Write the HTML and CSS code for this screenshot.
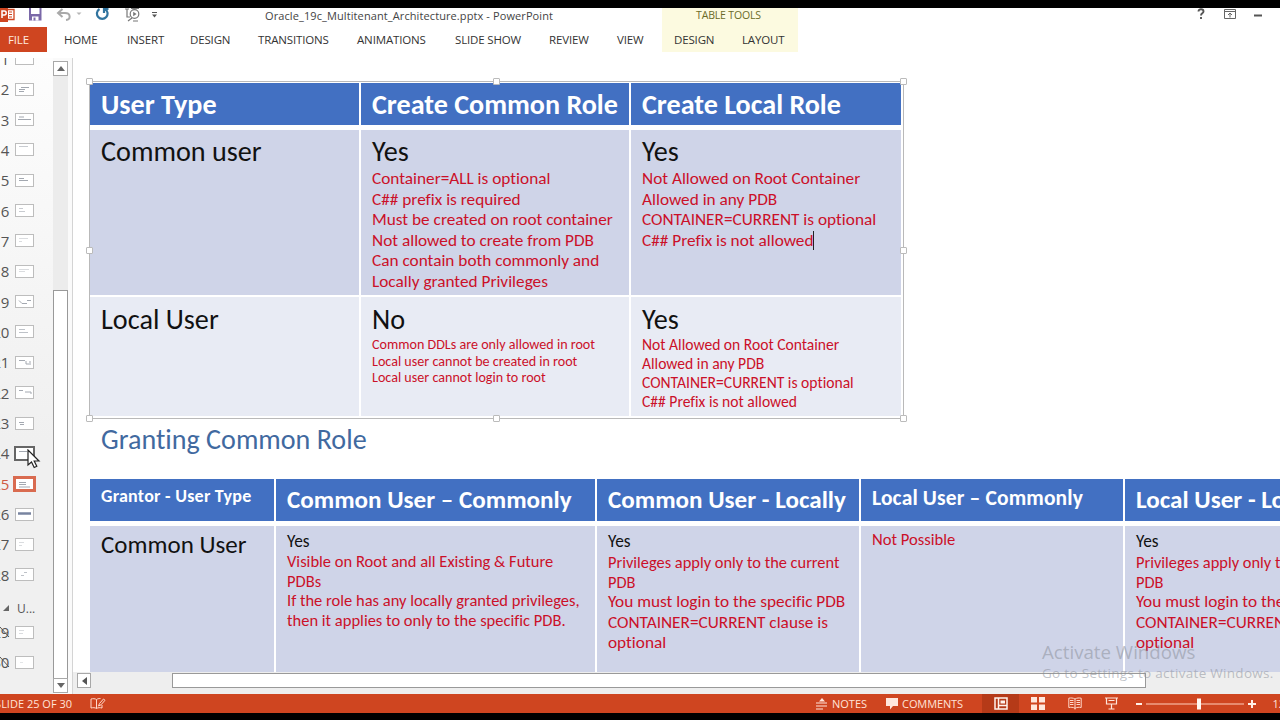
FILE: index.html
```html
<!DOCTYPE html>
<html lang="en">
<head>
    <meta charset="UTF-8">
    <meta name="viewport" content="width=device-width, initial-scale=1.0">
    <title>Oracle_19c_Multitenant_Architecture.pptx - PowerPoint</title>
    <link rel="stylesheet" href="styles.css">
</head>
<body>
<div class="app">
    <header class="ribbon">
        <div class="titlebar">
            <svg class="quick-access" width="170" height="19" viewBox="0 0 170 19">
                <path d="M0 0h8v14H0z" fill="#cf4520"/>
                <path d="M8 1.5h6v10H8" fill="#fff" stroke="#cf4520" stroke-width="1.3"/>
                <path d="M9 4h3M9 6.500h3M9 9h3" stroke="#cf4520"/>
                <path d="M2 10V3h2.200a1.800 1.800 0 0 1 0 4H2" fill="none" stroke="#fff" stroke-width="1.500"/>
                <path d="M29 0h12.500v12.500H29z" fill="#7a68a8"/>
                <path d="M31 0h8.500v6H31zM32 8.500h6.500v4H32z" fill="#fff"/>
                <path d="M33.500 9.500h2v3h-2z" fill="#7a68a8"/>
                <path d="M62.500 1l-4.500 4 4.500 4M58.500 5h6.500c6 0 6 6.500 1 7" fill="none" stroke="#a9a9a9" stroke-width="2"/>
                <path d="M76.500 4.500h5l-2.500 2.500z" fill="#b5b5b5"/>
                <path d="M99.500 1a5.300 5.300 0 1 0 5.500 0M104 5V.8h4.500" fill="none" stroke="#31749f" stroke-width="2.200"/>
                <path d="M125 1h4M127 1v8h3M132 10l-4 3M133 13h5M131 .5h8" fill="none" stroke="#777" stroke-width="1.200"/>
                <circle cx="134.500" cy="6" r="4.300" fill="#fff" stroke="#777" stroke-width="1.200"/>
                <path d="M133.200 3.800v4.400l3.400-2.200z" fill="#777"/>
                <path d="M152 4.500h5" stroke="#555"/>
                <path d="M152 6.500h5l-2.500 3z" fill="#555"/>
            </svg>
            <span class="doc-title">Oracle_19c_Multitenant_Architecture.pptx - PowerPoint</span>
            <span class="context-title">TABLE TOOLS</span>
            <svg class="window-buttons" width="90" height="19" viewBox="0 0 90 19">
                <path d="M9.500 3.500c0-3 5-3 5 0 0 2-2.500 1.700-2.500 4M12 9v2" fill="none" stroke="#555" stroke-width="1.900"/>
                <path d="M35.500 1.500h11v9h-11zM35.500 3.500h11M41 9.500V5M39 7l2-2 2 2" fill="none" stroke="#666"/>
                <path d="M65 7.500h8" stroke="#555" stroke-width="2"/>
            </svg>
        </div>
        <nav class="tabs">
            <span class="tab file">FILE</span>
            <span class="tab">HOME</span>
            <span class="tab">INSERT</span>
            <span class="tab">DESIGN</span>
            <span class="tab">TRANSITIONS</span>
            <span class="tab">ANIMATIONS</span>
            <span class="tab">SLIDE SHOW</span>
            <span class="tab">REVIEW</span>
            <span class="tab">VIEW</span>
            <span class="tab context">DESIGN</span>
            <span class="tab context">LAYOUT</span>
        </nav>
    </header>

    <main class="workspace">
        <aside class="thumbs">
            <div class="thumb"><b>1</b><i></i></div>
            <div class="thumb"><b>2</b><i><svg viewBox="0 0 17 11"><path d="M5 3.500h8M3 5.500h6M3 7.500h5"/></svg></i></div>
            <div class="thumb"><b>3</b><i><svg viewBox="0 0 17 11"><path d="M3 3h5M2 5.500h13"/></svg></i></div>
            <div class="thumb"><b>4</b><i><svg viewBox="0 0 17 11"><path d="M3 2.500h9" opacity=".6"/></svg></i></div>
            <div class="thumb"><b>5</b><i><svg viewBox="0 0 17 11"><path d="M3 3.500h5M3 5.500h9"/></svg></i></div>
            <div class="thumb"><b>6</b><i><svg viewBox="0 0 17 11"><path d="M3 3.500h4M3 6.500h6" opacity=".6"/></svg></i></div>
            <div class="thumb"><b>7</b><i><svg viewBox="0 0 17 11"><path d="M3 3.500h9M3 6.500h3" opacity=".4"/></svg></i></div>
            <div class="thumb"><b>8</b><i><svg viewBox="0 0 17 11"><path d="M3 3.500h10M3 5.500h6" opacity=".4"/></svg></i></div>
            <div class="thumb"><b>9</b><i><svg viewBox="0 0 17 11"><path d="M11 4.500h4M3 4.500l3 3h5"/></svg></i></div>
            <div class="thumb"><b>20</b><i><svg viewBox="0 0 17 11"><path d="M3 3.500h6M3 6.500h9" opacity=".7"/></svg></i></div>
            <div class="thumb"><b>21</b><i><svg viewBox="0 0 17 11"><path d="M3 3.500h6M10 4v3h3M14 4v4"/></svg></i></div>
            <div class="thumb"><b>22</b><i><svg viewBox="0 0 17 11"><path d="M3 3.500h4M9 5h6v2"/></svg></i></div>
            <div class="thumb"><b>23</b><i><svg viewBox="0 0 17 11"><path d="M3 4.500h5M4 6.500h4"/></svg></i></div>
            <div class="thumb hovered"><b>24</b><i><svg viewBox="0 0 17 11"><path d="M3 3.500h8"/></svg></i>
                <svg class="cursor" width="14" height="20" viewBox="0 0 14 20"><path d="M1 1v15l3.500-3 2.700 5.500 2.600-1.200L7.200 12H12z" fill="#fff" stroke="#222" stroke-width="1.200"/></svg>
            </div>
            <div class="thumb current"><b>25</b><i><svg viewBox="0 0 17 11"><path d="M3 3.500h7M3 5.500h7M3 8h11"/></svg></i></div>
            <div class="thumb"><b>26</b><i><svg viewBox="0 0 17 11"><path class="bold" d="M2 4.500h13"/></svg></i></div>
            <div class="thumb"><b>27</b><i><svg viewBox="0 0 17 11"><path d="M3 3.500h5M3 6.500h3" opacity=".4"/></svg></i></div>
            <div class="thumb"><b>28</b><i><svg viewBox="0 0 17 11"><path d="M8 3.500h3M5 6.500h3" opacity=".7"/></svg></i></div>
            <div class="section-name"><svg width="6" height="6" viewBox="0 0 6 6"><path d="M6 0v6H0z" fill="#666"/></svg>U...</div>
            <div class="thumb skipped"><b>29</b><i><svg viewBox="0 0 17 11"><path d="M3 3.500h5M3 6.500h4" opacity=".4"/></svg></i>
                <svg class="slash" width="10" height="12" viewBox="0 0 10 12"><path d="M0 1l9 10" stroke="#555"/></svg>
            </div>
            <div class="thumb skipped"><b>30</b><i><svg viewBox="0 0 17 11"><path d="M4 5.500h3" opacity=".3"/></svg></i>
                <svg class="slash" width="10" height="12" viewBox="0 0 10 12"><path d="M0 1l9 10" stroke="#555"/></svg>
            </div>
        </aside>
        <div class="vscroll">
            <span class="arrow"><svg width="8" height="5" viewBox="0 0 8 5"><path d="M0 5l4-5 4 5z" fill="#666"/></svg></span>
            <span class="track"></span>
            <span class="knob"></span>
            <span class="arrow"><svg width="8" height="5" viewBox="0 0 8 5"><path d="M0 0l4 5 4-5z" fill="#666"/></svg></span>
        </div>

        <section class="editor">
            <div class="slide">
                <div class="table roles">
                    <div class="cell head">User Type</div>
                    <div class="cell head">Create Common Role</div>
                    <div class="cell head">Create Local Role</div>

                    <div class="cell"><p>Common user</p></div>
                    <div class="cell">
                        <p>Yes</p>
                        <p class="note">Container=ALL is optional</p>
                        <p class="note">C## prefix is required</p>
                        <p class="note">Must be created on root container</p>
                        <p class="note">Not allowed to create from PDB</p>
                        <p class="note">Can contain both commonly and</p>
                        <p class="note">Locally granted Privileges</p>
                    </div>
                    <div class="cell">
                        <p>Yes</p>
                        <p class="note">Not Allowed on Root Container</p>
                        <p class="note">Allowed in any PDB</p>
                        <p class="note">CONTAINER=CURRENT is optional</p>
                        <p class="note">C## Prefix is not allowed<span class="caret"></span></p>
                    </div>

                    <div class="cell light"><p>Local User</p></div>
                    <div class="cell light">
                        <p>No</p>
                        <p class="note small">Common DDLs are only allowed in root</p>
                        <p class="note small">Local user cannot be created in root</p>
                        <p class="note small">Local user cannot login to root</p>
                    </div>
                    <div class="cell light">
                        <p>Yes</p>
                        <p class="note medium">Not Allowed on Root Container</p>
                        <p class="note medium">Allowed in any PDB</p>
                        <p class="note medium">CONTAINER=CURRENT is optional</p>
                        <p class="note medium">C## Prefix is not allowed</p>
                    </div>

                    <div class="selection">
                        <i></i><i></i><i></i>
                        <i></i><i class="none"></i><i></i>
                        <i></i><i></i><i></i>
                    </div>
                </div>

                <h2>Granting Common Role</h2>

                <div class="table grants">
                    <div class="cell head type">Grantor - User Type</div>
                    <div class="cell head">Common User – Commonly</div>
                    <div class="cell head">Common User - Locally</div>
                    <div class="cell head local">Local User – Commonly</div>
                    <div class="cell head">Local User - Locally</div>

                    <div class="cell"><p class="grantor">Common User</p></div>
                    <div class="cell tight">
                        <p class="answer">Yes</p>
                        <p class="note">Visible on Root and all Existing &amp; Future</p>
                        <p class="note">PDBs</p>
                        <p class="note">If the role has any locally granted privileges,</p>
                        <p class="note">then it applies to only to the specific PDB.</p>
                    </div>
                    <div class="cell">
                        <p class="answer">Yes</p>
                        <p class="note short">Privileges apply only to the current</p>
                        <p class="note short">PDB</p>
                        <p class="note">You must login to the specific PDB</p>
                        <p class="note">CONTAINER=CURRENT clause is</p>
                        <p class="note">optional</p>
                    </div>
                    <div class="cell"><p class="note impossible">Not Possible</p></div>
                    <div class="cell">
                        <p class="answer">Yes</p>
                        <p class="note short">Privileges apply only to the current</p>
                        <p class="note short">PDB</p>
                        <p class="note">You must login to the specific PDB</p>
                        <p class="note">CONTAINER=CURRENT clause is</p>
                        <p class="note">optional</p>
                    </div>
                </div>
            </div>
            <div class="hscroll">
                <span class="arrow"><svg width="5" height="8" viewBox="0 0 5 8"><path d="M5 0L0 4l5 4z" fill="#555"/></svg></span>
                <span class="knob"></span>
            </div>
        </section>
    </main>

    <footer class="statusbar">
        <span class="slide-count">SLIDE 25 OF 30</span>
        <svg width="16" height="14" viewBox="0 0 16 14"><path d="M6.500 2.500C5 1.500 3 1.500 1 2v9c2-.5 4-.5 5.500.5zM6.500 2.500c1-.7 2-1 4-1M6.500 11.500c1.500-1 3.500-1 5.500-.5V8M8.500 9l1-2.500 4-4.500 1.500 1.300-4 4.500z" fill="none" stroke="#ffd9cb"/></svg>
        <span class="spacer"></span>
        <svg width="12" height="13" viewBox="0 0 12 13"><path d="M6 1l3 3.500H3z" fill="#ffe6dc"/><path d="M0 6h11M0 9h11M0 12h7" stroke="#ffe6dc" stroke-width="1.200"/></svg>
        <span class="notes">NOTES</span>
        <svg width="12" height="13" viewBox="0 0 12 13"><path d="M0 1h12v8H7l-3 3.500V9H0z" fill="#ffe6dc"/></svg>
        <span class="comments">COMMENTS</span>
        <span class="view active"><svg width="14" height="13" viewBox="0 0 14 13"><path d="M1 1h12v11H1zM4.500 1v11M4.500 8.500H13" fill="none" stroke="#fff3ec" stroke-width="1.500"/><path d="M6.500 3.500h4.500v3H6.500z" fill="#fff3ec"/></svg></span>
        <span class="view"><svg width="14" height="13" viewBox="0 0 14 13"><path d="M0 0h6v5.500H0zM8 0h6v5.500H8zM0 7.500h6V13H0zM8 7.500h6V13H8z" fill="#ffe6dc"/></svg></span>
        <span class="view"><svg width="14" height="13" viewBox="0 0 14 13"><path d="M7 2C5 .8 3 .8 .8 1.200v9.300c2.200-.4 4.200-.4 6.200.8 2-1.200 4-1.200 6.200-.8V1.200C11 .8 9 .8 7 2zM7 2v10.500M2 3.500h3.500M2 5.500h3.500M2 7.500h3.500M8.500 3.500H12M8.500 5.500H12M8.500 7.500H12" fill="none" stroke="#ffd9cb"/></svg></span>
        <span class="view"><svg width="14" height="13" viewBox="0 0 14 13"><path d="M0 1h13M1.500 1v6h10V1M6.500 7v5M3.500 12h6M3.500 3.500h6" fill="none" stroke="#ffe6dc" stroke-width="1.200"/></svg></span>
        <svg class="zoom" width="120" height="14" viewBox="0 0 120 14"><path d="M0 7h6M112 7h8M116 3v8" stroke="#fff0e8" stroke-width="2"/><path d="M10 7h98" stroke="#ffd0bd"/><path d="M61 1.500h4v11h-4z" fill="#fff8f2"/></svg>
        <span class="percent">124%</span>
    </footer>

    <div class="watermark">
        <strong>Activate Windows</strong>
        <span>Go to Settings to activate Windows.</span>
    </div>
</div>
</body>
</html>
```

FILE: styles.css
```css
* { box-sizing: border-box; }
body { margin: 0; background: #000; font-family: "Open Sans", sans-serif; overflow: hidden; }
p, h2 { margin: 0; font-weight: normal; }
svg { display: block; flex: none; }
.app { position: relative; width: 1280px; height: 720px; padding: 8px 0 7px; display: flex; flex-direction: column; overflow: hidden; white-space: nowrap; }

/* ribbon */
.ribbon { height: 50px; background: #fff; color: #333; }
.titlebar { display: flex; height: 19px; line-height: 15px; font-size: 11px; }
.quick-access { margin-right: 95px; }
.doc-title { width: 397px; letter-spacing: 0.1px; color: #444; }
.context-title { width: 136px; padding-right: 3px; text-align: center; font-size: 10.5px; letter-spacing: -0.15px; background: #fcfae0; color: #6b6a28; }
.window-buttons { margin-left: 391px; }
.tabs { display: grid; grid-template-columns: 50px 63px 63px 68px 99px 98px 94px 68px 59px 68px 68px; height: 25px; line-height: 25px; font-size: 11.5px; letter-spacing: -0.15px; }
.tab { padding-left: 14px; }
.tab.file { width: 47px; padding-left: 8px; background: #cf4520; color: #ffeadf; }
.tab.context { padding-left: 12px; background: #fcfae0; }

/* slide thumbnails */
.workspace { display: flex; height: 636px; background: #fff; }
.thumbs { width: 53px; height: 100%; overflow: hidden; background: linear-gradient(#fdfdfd, #f0f0f0 60%); padding-bottom: 10px; }
.thumb { position: relative; display: flex; align-items: center; height: 30.35px; }
.thumb:first-child { margin-top: -14.300px; }
.thumb b { display: flex; justify-content: flex-end; width: 9px; margin-right: 6px; font-size: 15px; font-weight: normal; letter-spacing: -0.3px; color: #555; }
.thumb i { width: 19px; height: 13px; border: 1px solid #bdbdbd; background: #fff; }
.thumb i svg { width: 17px; height: 11px; }
.thumb i path { fill: none; stroke: #a3a8b0; stroke-width: 1; }
.thumb i .bold { stroke: #7884a0; stroke-width: 2.5; }
.thumb.hovered i { width: 21px; height: 15px; margin-left: -1px; border: 2px solid #666; }
.thumb.current b { color: #cf5a43; }
.thumb.current i { width: 23px; height: 16px; margin-left: -2px; border: 3px solid #d96b50; }
.slash { position: absolute; left: 0; top: 9px; }
.cursor { position: absolute; left: 27px; top: 11px; z-index: 2; }
.section-name { display: flex; align-items: center; height: 27px; padding: 10px 0 0 3px; font-size: 12px; color: #555; }
.section-name svg { margin-right: 8px; }

/* scroll bars */
.vscroll { display: flex; flex-direction: column; width: 20px; padding: 3px 4px 1px 0; border-right: 1px solid #d4d4d4; background: #fafafa; }
.arrow { display: flex; align-items: center; justify-content: center; width: 15px; height: 15px; border: 1px solid #a8a8a8; background: #fff; flex: none; }
.track { height: 214px; background: #ececec; }
.knob { border: 1px solid #999; background: #fff; }
.vscroll .knob { flex: 1; width: 15px; margin-bottom: -1px; }
.editor { width: 1207px; overflow: hidden; }
.hscroll { display: flex; height: 22px; padding: 1px 0 6px 4px; background: #eee; }
.hscroll .arrow { width: 14px; margin-left: 0; }
.hscroll .knob { width: 974px; height: 15px; margin-left: 81px; }

/* slide */
.slide { height: 614px; padding: 25px 0 0 17px; overflow: hidden; font-family: Carlito, Lato, sans-serif; font-variant-ligatures: none; color: #111; }
.table { position: relative; display: grid; column-gap: 2px; }
.cell { padding: 5px 0 0 11px; background: #cfd4e8; }
.cell p { height: 33px; line-height: 33px; font-size: 28.2px; }
.cell.light { background: #e8ebf4; }
.cell.head { padding-top: 0; background: #4270c2; color: #fff; font-weight: bold; font-size: 28.1px; line-height: 44px; }
.roles { width: 811px; height: 333px; grid-template-columns: 269px 268px 1fr; grid-template-rows: 45px 165px 119px; row-gap: 2px; }
.roles .head { height: 42px; }
.cell .note { position: relative; top: 1px; height: 20.600px; line-height: 20.600px; font-size: 17.250px; color: #cb1029; }
.cell .note.small { top: 2px; height: 16.600px; line-height: 16.600px; font-size: 14.100px; }
.cell .note.medium { height: 18.900px; line-height: 18.900px; font-size: 15.600px; }
.cell.light p { position: relative; top: 1px; }
.caret { display: inline-block; width: 1px; height: 19px; background: #222; vertical-align: -4px; }
.selection { position: absolute; left: -4px; top: -5px; width: 821px; height: 344px; display: grid; grid-template-columns: repeat(3, auto); justify-content: space-between; align-content: space-between; }
.selection::before { content: ""; position: absolute; inset: 3px; border: 1px solid #b9b9b9; }
.selection i { position: relative; width: 7px; height: 7px; border: 1px solid #bbb; border-radius: 1px; background: #fff; }
.selection .none { visibility: hidden; }
h2 { height: 63px; padding-left: 11px; font-size: 28.1px; line-height: 48px; color: #41699f; }
.grants { width: 1300px; grid-template-columns: 184px 319px 262px 262px 265px; grid-template-rows: 42px 147px; row-gap: 5px; }
.grants .head { font-size: 25.1px; line-height: 42px; }
.grants .head.type { font-size: 18px; letter-spacing: 0.25px; line-height: 34px; }
.grants .head.local { font-size: 21.500px; letter-spacing: 0.15px; line-height: 38px; }
.grants .grantor { height: 28px; line-height: 28px; font-size: 25px; }
.grants .answer { height: 21px; line-height: 21px; font-size: 17.300px; }
.grants .note { top: 0; }
.grants .note.short { font-size: 16.400px; height: 20px; line-height: 20px; }
.grants .tight .note { height: 19.700px; line-height: 19.700px; font-size: 16.500px; }
.grants .note.impossible { height: 18px; line-height: 16px; font-size: 16.600px; }

/* status bar */
.statusbar { display: flex; align-items: center; height: 19px; background: #cf4520; color: #ffe3d8; font-size: 11px; }
.slide-count { width: 72px; margin-right: 18px; display: flex; justify-content: flex-end; }
.spacer { width: 710px; flex: none; }
.notes { width: 36px; margin: 0 19px 0 4px; }
.comments { width: 61px; margin: 0 19px 0 4px; letter-spacing: -0.1px; }
.view { display: flex; align-items: center; justify-content: center; width: 37.100px; height: 19px; flex: none; }
.view.active { background: #b53a18; }
.zoom { margin-left: 6px; }
.percent { width: 8px; margin-left: 16px; }

.watermark { position: absolute; left: 1042px; top: 640px; display: flex; flex-direction: column; color: rgba(140, 145, 155, 0.55); }
.watermark strong { font-weight: normal; font-size: 18.700px; line-height: 24px; }
.watermark span { font-size: 13.500px; line-height: 19px; letter-spacing: 0.3px; }
```
